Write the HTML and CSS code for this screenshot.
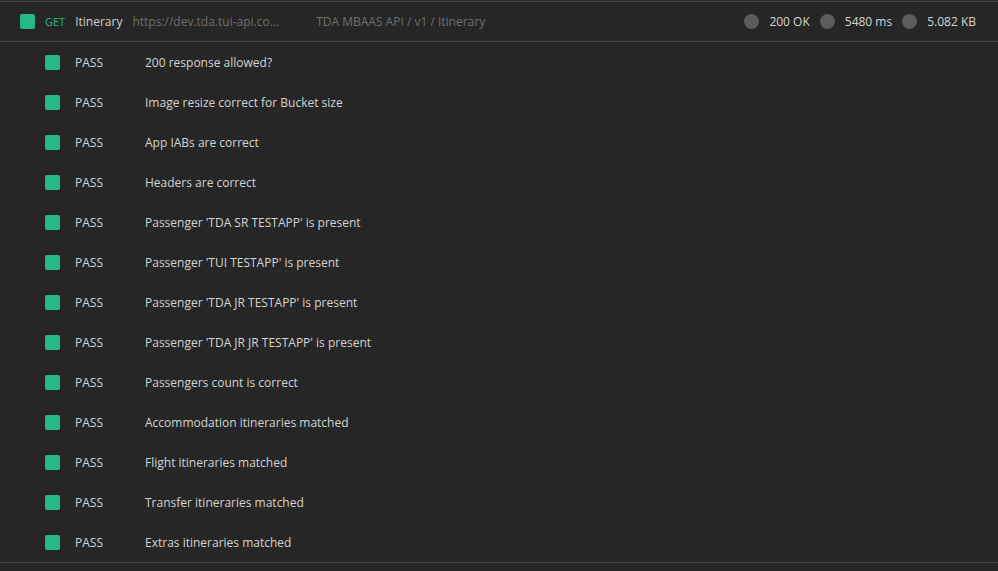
FILE: index.html
```html
<!DOCTYPE html>
<html>
<head>
<meta charset="utf-8">
<link rel="stylesheet" href="styles.css">
</head>
<body>
<div class="run">
  <div class="header">
    <span class="sq"></span>
    <span class="method">GET</span>
    <span class="name">Itinerary</span>
    <span class="url">https://dev.tda.tui-api.co...</span>
    <span class="path">TDA MBAAS API / v1 / Itinerary</span>
    <div class="stats">
      <span class="dot"></span><span class="stat">200 OK</span>
      <span class="dot"></span><span class="stat">5480 ms</span>
      <span class="dot"></span><span class="stat">5.082 KB</span>
    </div>
  </div>
  <div class="tests">
    <div class="test"><span class="sq"></span><span class="status">PASS</span><span class="tname">200 response allowed?</span></div>
    <div class="test"><span class="sq"></span><span class="status">PASS</span><span class="tname">Image resize correct for Bucket size</span></div>
    <div class="test"><span class="sq"></span><span class="status">PASS</span><span class="tname">App IABs are correct</span></div>
    <div class="test"><span class="sq"></span><span class="status">PASS</span><span class="tname">Headers are correct</span></div>
    <div class="test"><span class="sq"></span><span class="status">PASS</span><span class="tname">Passenger 'TDA SR TESTAPP' is present</span></div>
    <div class="test"><span class="sq"></span><span class="status">PASS</span><span class="tname">Passenger 'TUI TESTAPP' is present</span></div>
    <div class="test"><span class="sq"></span><span class="status">PASS</span><span class="tname">Passenger 'TDA JR TESTAPP' is present</span></div>
    <div class="test"><span class="sq"></span><span class="status">PASS</span><span class="tname">Passenger 'TDA JR JR TESTAPP' is present</span></div>
    <div class="test"><span class="sq"></span><span class="status">PASS</span><span class="tname">Passengers count is correct</span></div>
    <div class="test"><span class="sq"></span><span class="status">PASS</span><span class="tname">Accommodation itineraries matched</span></div>
    <div class="test"><span class="sq"></span><span class="status">PASS</span><span class="tname">Flight itineraries matched</span></div>
    <div class="test"><span class="sq"></span><span class="status">PASS</span><span class="tname">Transfer itineraries matched</span></div>
    <div class="test"><span class="sq"></span><span class="status">PASS</span><span class="tname">Extras itineraries matched</span></div>
  </div>
</div>
</body>
</html>
```
FILE: styles.css
```css
html, body {
  margin: 0;
  padding: 0;
  background: #262626;
  height: 100%;
}
body {
  font-family: "Open Sans", "DejaVu Sans", sans-serif;
  font-size: 12px;
  color: #d4d4d4;
}
.run {
  margin-top: 1px;
  border-top: 1px solid #464646;
  border-bottom: 1px solid #464646;
}
.header {
  height: 39px;
  display: flex;
  align-items: center;
  padding-left: 20px;
  padding-right: 22px;
  border-bottom: 1px solid #464646;
}
.sq {
  width: 15px;
  height: 15px;
  border-radius: 2px;
  background: #26b985;
  flex: none;
}
.method {
  margin-left: 10px;
  color: #26b985;
  font-size: 11px;
}
.name {
  margin-left: 10px;
}
.url {
  margin-left: 10px;
  color: #6f6f6f;
}
.path {
  margin-left: 37px;
  color: #6f6f6f;
}
.stats {
  margin-left: auto;
  display: flex;
  align-items: center;
}
.dot {
  width: 15px;
  height: 15px;
  border-radius: 50%;
  background: #5c5c5c;
  margin-left: 10px;
  margin-right: 10px;
}
.stat {
  color: #d4d4d4;
}
.test {
  height: 40px;
  display: flex;
  align-items: center;
  padding-left: 45px;
}
.status {
  margin-left: 15px;
  width: 70px;
}
```
